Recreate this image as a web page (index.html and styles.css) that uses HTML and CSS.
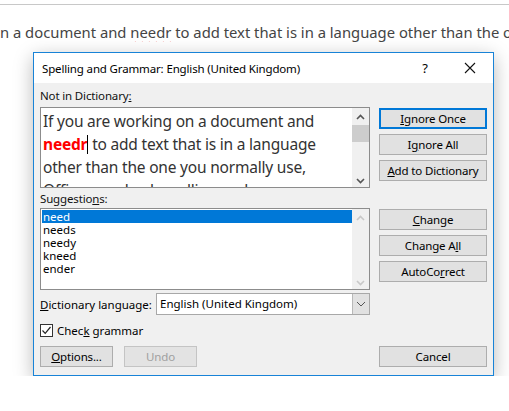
FILE: index.html
```html
<!DOCTYPE html>
<html lang="en">
<head>
  <meta charset="UTF-8" />
  <title>Spelling and Grammar</title>
  <link rel="stylesheet" href="styles.css">
</head>
<body>

  <div class="regle"></div>
  <div class="doc">
    <p class="doc-ligne">on a document and <span class="faute">needr</span> to add text that is in a language other than the one</p>
  </div>

  <div class="dialogue">
    <div class="titre">
      <span class="titre-texte">Spelling and Grammar: English (United Kingdom)</span>
      <span class="aide">?</span>
      <svg class="fermer" width="12" height="12" viewBox="0 0 12 12">
        <path d="M1 1 L11 11 M11 1 L1 11" stroke="#111" stroke-width="1.1" fill="none"/>
      </svg>
    </div>

    <div class="corps">
      <div class="etiquette">Not in Dictionary<u>:</u></div>
      <div></div>

      <div class="zone-texte">
        <div class="texte">If you are working on a document and <b class="mot-rouge">needr</b><span class="curseur"></span> to add text that is in a language other than the one you normally use, Office can check spelling and grammar of</div>
        <div class="defil">
          <svg width="17" height="12" viewBox="0 0 17 12"><path d="M5 8 L8.5 4.5 L12 8" stroke="#555" stroke-width="1.6" fill="none"/></svg>
          <div class="pouce"></div>
          <div class="vide"></div>
          <svg width="17" height="12" viewBox="0 0 17 12"><path d="M5 4 L8.5 7.5 L12 4" stroke="#555" stroke-width="1.6" fill="none"/></svg>
        </div>
      </div>
      <div class="boutons">
        <button class="defaut"><u>I</u>gnore Once</button>
        <button>I<u>g</u>nore All</button>
        <button><u>A</u>dd to Dictionary</button>
      </div>

      <div class="etiquette etiquette-sugg">Suggestio<u>n</u>s:</div>
      <div></div>

      <div class="liste">
        <div class="items">
          <div class="item choisi">need</div>
          <div class="item">needs</div>
          <div class="item">needy</div>
          <div class="item">kneed</div>
          <div class="item">ender</div>
        </div>
        <div class="defil defil-off">
          <svg width="17" height="12" viewBox="0 0 17 12"><path d="M5 8 L8.5 4.5 L12 8" stroke="#c8c8c8" stroke-width="1.6" fill="none"/></svg>
          <div class="vide"></div>
          <svg width="17" height="12" viewBox="0 0 17 12"><path d="M5 4 L8.5 7.5 L12 4" stroke="#c8c8c8" stroke-width="1.6" fill="none"/></svg>
        </div>
      </div>
      <div class="boutons">
        <button><u>C</u>hange</button>
        <button>Change A<u>l</u>l</button>
        <button>AutoCo<u>r</u>rect</button>
      </div>

      <div class="ligne-langue">
        <span><u>D</u>ictionary language:</span>
        <div class="combo">
          <span class="combo-texte">English (United Kingdom)</span>
          <span class="combo-fleche">
            <svg width="10" height="6" viewBox="0 0 10 6"><path d="M1 1 L5 5 L9 1" stroke="#555" stroke-width="1" fill="none"/></svg>
          </span>
        </div>
      </div>
      <div></div>

      <div class="ligne-case">
        <span class="case">
          <svg width="11" height="11" viewBox="0 0 11 11"><path d="M1.5 5.5 L4.2 8.3 L9.5 2" stroke="#222" stroke-width="1.2" fill="none"/></svg>
        </span>
        <span>Chec<u>k</u> grammar</span>
      </div>
      <div></div>

      <div class="ligne-actions">
        <button class="petit"><u>O</u>ptions...</button>
        <button class="petit" disabled>Undo</button>
      </div>
      <div class="ligne-annuler">
        <button>Cancel</button>
      </div>
    </div>
  </div>

</body>
</html>
```

FILE: styles.css
```css
body {
  margin: 0;
  background: #ffffff;
  font-family: "Noto Sans", "Open Sans", sans-serif;
  color: #000;
  overflow: hidden;
}
.regle {
  height: 1px;
  background: #c8c8c8;
  margin-top: 4px;
}
.doc {
  overflow: hidden;
  margin-top: 17px;
  height: 20px;
}
.doc-ligne {
  margin: 0 0 0 -9px;
  font-size: 14.8px;
  line-height: 20px;
  color: #444;
  white-space: nowrap;
}
.faute {
  text-decoration: underline wavy #e02020;
  text-decoration-thickness: 1px;
  text-underline-offset: 3px;
}
.dialogue {
  margin: 10px 0 0 33px;
  width: 459px;
  height: 322px;
  border: 1px solid #1883d7;
  background: #f0f0f0;
  box-shadow: 0 5px 18px rgba(0,0,0,0.28);
  font-size: 12px;
}
.titre {
  height: 30px;
  background: #fff;
  display: flex;
  align-items: center;
  padding-left: 8px;
}
.titre-texte {
  flex: 1;
  font-size: 11.5px;
  letter-spacing: -0.15px;
}
.aide {
  font-size: 13px;
  margin-right: 36px;
}
.fermer {
  margin-right: 17px;
}
.corps {
  display: grid;
  grid-template-columns: 330px 108px;
  column-gap: 9px;
  padding: 5px 6px 0 6px;
}
.etiquette {
  height: 19px;
  line-height: 15px;
  font-size: 11.5px;
  letter-spacing: -0.15px;
  color: #111;
}
.etiquette-sugg {
  height: 20px;
  line-height: 21px;
}
.zone-texte, .liste {
  display: flex;
  background: #fff;
  border: 1px solid #8c8c8c;
  overflow: hidden;
}
.zone-texte {
  height: 79px;
}
.texte {
  flex: 1;
  padding: 2px 20px 0 2px;
  font-size: 15.5px;
  line-height: 23px;
  color: #333;
  letter-spacing: -0.2px;
}
.mot-rouge {
  color: #f00;
}
.curseur {
  display: inline-block;
  width: 1px;
  height: 19px;
  background: #000;
  vertical-align: -4px;
}
.defil {
  width: 17px;
  background: #f0f0f0;
  display: flex;
  flex-direction: column;
}
.defil svg {
  margin-top: 3px;
}
.pouce {
  height: 17px;
  background: #cdcdcd;
  margin-top: 2px;
}
.vide {
  flex: 1;
}
.boutons {
  display: flex;
  flex-direction: column;
  gap: 5px;
  padding-top: 1px;
}
button {
  height: 21px;
  padding: 0;
  background: #e1e1e1;
  border: 1px solid #adadad;
  font-family: inherit;
  font-size: 11.5px;
  letter-spacing: -0.15px;
  color: #000;
}
button.defaut {
  border: 2px solid #0078d7;
}
button:disabled {
  color: #a0a0a0;
  background: #e3e3e3;
  border-color: #c4c4c4;
}
.liste {
  height: 80px;
}
.items {
  flex: 1;
  padding: 1px 0 0 1px;
}
.item {
  height: 13px;
  line-height: 13px;
  padding-left: 1px;
  font-size: 11.5px;
}
.choisi {
  background: #0078d7;
  color: #fff;
}
.ligne-langue {
  display: flex;
  align-items: center;
  justify-content: space-between;
  margin-top: 3px;
  font-size: 11.5px;
}
.combo {
  width: 212px;
  height: 20px;
  display: flex;
  background: #fff;
  border: 1px solid #a8a8a8;
}
.combo-texte {
  flex: 1;
  padding-left: 3px;
  line-height: 20px;
}
.combo-fleche {
  width: 16px;
  background: #e1e1e1;
  border-left: 1px solid #b8b8b8;
  display: flex;
  align-items: center;
  justify-content: center;
}
.ligne-case {
  display: flex;
  align-items: center;
  gap: 4px;
  margin-top: 9px;
  height: 13px;
  font-size: 11.5px;
}
.case {
  width: 11px;
  height: 11px;
  border: 1px solid #333;
  background: #fff;
  display: flex;
}
.ligne-actions {
  display: flex;
  gap: 11px;
  margin-top: 9px;
}
.petit {
  width: 73px;
}
.ligne-annuler {
  display: flex;
  flex-direction: column;
  margin-top: 9px;
}
```
